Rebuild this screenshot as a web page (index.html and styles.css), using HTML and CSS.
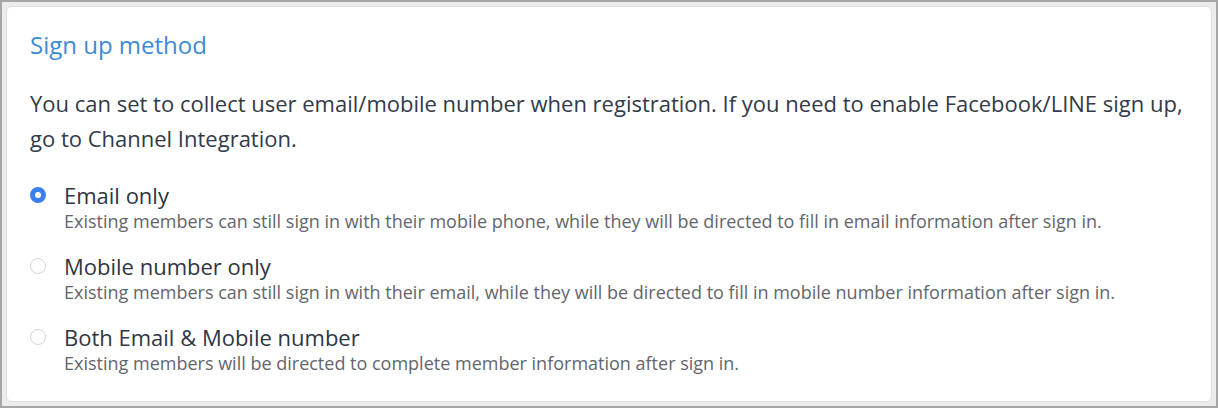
FILE: index.html
```html
<!DOCTYPE html>
<html>
<head>
<meta charset="utf-8">
<link rel="stylesheet" href="styles.css">
</head>
<body>
<div class="frame">
  <div class="card">
    <h2 class="title">Sign up method</h2>
    <p class="desc">You can set to collect user email/mobile number when registration. If you need to enable Facebook/LINE sign up, go to Channel Integration.</p>
    <div class="options">
      <div class="option">
        <span class="radio checked"></span>
        <div class="option-text">
          <div class="label">Email only</div>
          <div class="hint">Existing members can still sign in with their mobile phone, while they will be directed to fill in email information after sign in.</div>
        </div>
      </div>
      <div class="option">
        <span class="radio"></span>
        <div class="option-text">
          <div class="label">Mobile number only</div>
          <div class="hint">Existing members can still sign in with their email, while they will be directed to fill in mobile number information after sign in.</div>
        </div>
      </div>
      <div class="option">
        <span class="radio"></span>
        <div class="option-text">
          <div class="label">Both Email &amp; Mobile number</div>
          <div class="hint">Existing members will be directed to complete member information after sign in.</div>
        </div>
      </div>
    </div>
  </div>
</div>
</body>
</html>
```
FILE: styles.css
```css
html, body {
  margin: 0;
  padding: 0;
}
body {
  font-family: "Open Sans", "Liberation Sans", sans-serif;
}
.frame {
  box-sizing: border-box;
  width: 1218px;
  height: 408px;
  border: 2px solid #a6a6a6;
  background: #ececec;
  padding: 4px;
  display: flex;
}
.card {
  flex: 1;
  background: #fff;
  border: 1px solid #dedede;
  border-radius: 6px;
  padding: 22px 23px 0 23px;
}
.title {
  margin: 0;
  font-size: 24px;
  font-weight: 400;
  line-height: 32px;
  color: #3d8ad9;
}
.desc {
  margin: 25px 0 0 0;
  font-size: 22px;
  line-height: 35px;
  color: #333a48;
}
.options {
  margin-top: 24px;
  display: flex;
  flex-direction: column;
  gap: 19px;
}
.option {
  display: flex;
  align-items: flex-start;
  gap: 18px;
}
.radio {
  box-sizing: border-box;
  width: 16px;
  height: 16px;
  border-radius: 50%;
  border: 1px solid #d6d6d6;
  background: #fff;
  margin-top: 7px;
  flex: none;
}
.radio.checked {
  border: 5px solid #3b80f0;
}
.label {
  font-size: 22px;
  line-height: 30px;
  color: #2f3645;
}
.hint {
  font-size: 18px;
  line-height: 22px;
  color: #63666c;
}
```
